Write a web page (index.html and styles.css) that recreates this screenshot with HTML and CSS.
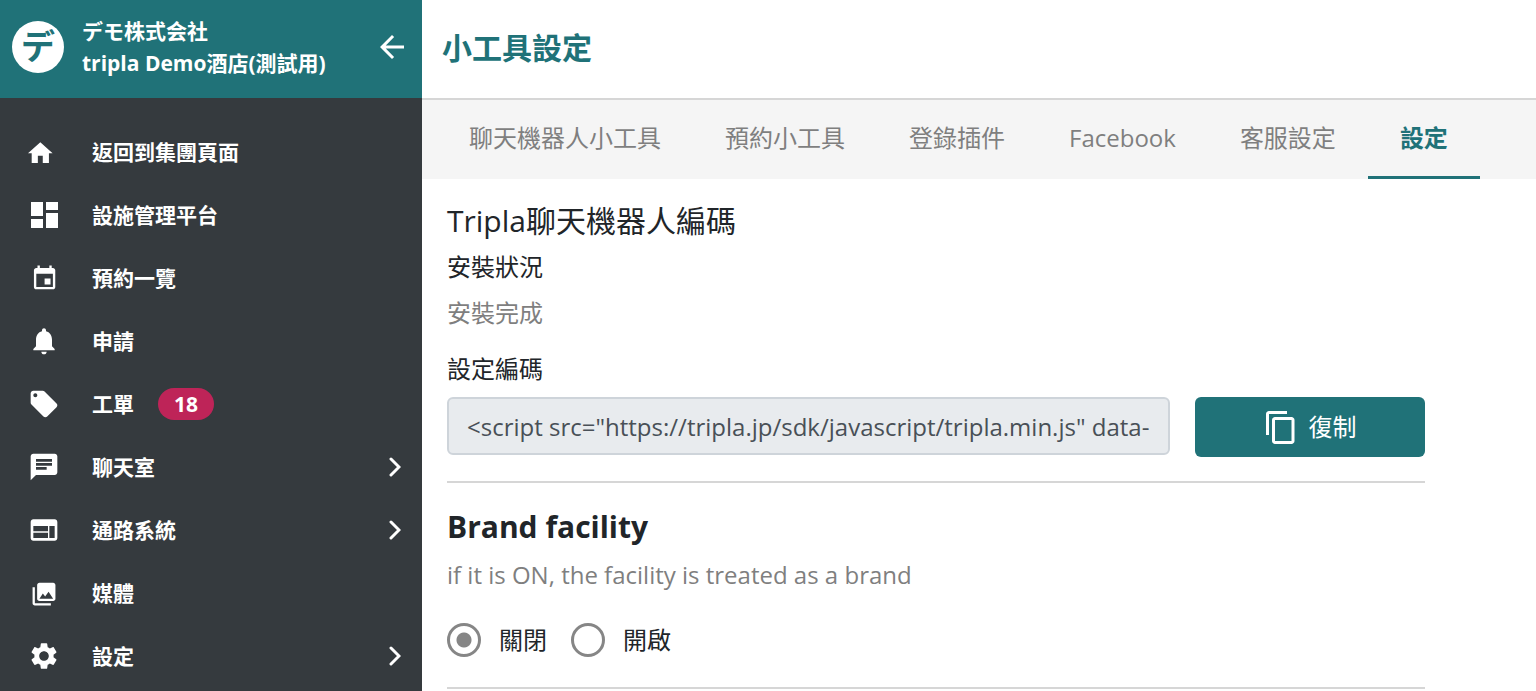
FILE: index.html
```
<!DOCTYPE html>
<html lang="zh-Hant">

<head>
    <meta charset="UTF-8">
    <meta name="viewport" content="width=device-width, initial-scale=1.0">
    <title>小工具設定</title>
    <link rel="stylesheet" href="styles.css">
</head>

<body>
    <aside class="sidebar">
        <div class="sidebar-header">
            <div class="logo">デ</div>
            <div class="hotel-name">
                <p>デモ株式会社</p>
                <p>tripla Demo酒店(測試用)</p>
            </div>
            <button type="button" class="collapse-button" aria-label="Collapse">
                <svg viewBox="0 0 24 24"><path d="M20 11H7.83l5.59-5.59L12 4l-8 8 8 8 1.41-1.41L7.83 13H20v-2z"/></svg>
            </button>
        </div>

        <nav class="menu">
            <a href="#" class="menu-item">
                <svg class="menu-icon" viewBox="2 -2 26 26"><path d="M10 20v-6h4v6h5v-8h3L12 3 2 12h3v8z"/></svg>
                <span>返回到集團頁面</span>
            </a>
            <a href="#" class="menu-item">
                <svg class="menu-icon" viewBox="0 0 32 32"><path d="M3 3h12v14H3zM3 20h12v9H3zM18 3h12v8H18zM18 14h12v15H18z"/></svg>
                <span>設施管理平台</span>
            </a>
            <a href="#" class="menu-item">
                <svg class="menu-icon" viewBox="-2 -2 27 27"><path d="M17 12h-5v5h5v-5zM16 1v2H8V1H6v2H5c-1.11 0-1.99.9-1.99 2L3 19c0 1.1.89 2 2 2h14c1.1 0 2-.9 2-2V5c0-1.1-.9-2-2-2h-1V1h-2zm3 18H5V8h14v11z"/></svg>
                <span>預約一覽</span>
            </a>
            <a href="#" class="menu-item">
                <svg class="menu-icon" viewBox="0 0 24 24"><path d="M12 22c1.1 0 2-.9 2-2h-4c0 1.1.89 2 2 2zm6-6v-5c0-3.07-1.64-5.64-4.5-6.32V4c0-.83-.67-1.5-1.5-1.5s-1.5.67-1.5 1.5v.68C7.63 5.36 6 7.92 6 11v5l-2 2v1h16v-1l-2-2z"/></svg>
                <span>申請</span>
            </a>
            <a href="#" class="menu-item">
                <svg class="menu-icon" viewBox="0 0 24 24"><path d="M21.41 11.58l-9-9C12.05 2.22 11.55 2 11 2H4c-1.1 0-2 .9-2 2v7c0 .55.22 1.05.59 1.42l9 9c.36.36.86.58 1.41.58.55 0 1.05-.22 1.41-.59l7-7c.37-.36.59-.86.59-1.41 0-.55-.23-1.06-.59-1.42zM5.5 7C4.67 7 4 6.33 4 5.5S4.67 4 5.5 4 7 4.67 7 5.5 6.33 7 5.5 7z"/></svg>
                <span>工單</span>
                <span class="badge">18</span>
            </a>
            <a href="#" class="menu-item">
                <svg class="menu-icon" viewBox="0 0 24 24"><path d="M20 2H4c-1.1 0-1.99.9-1.99 2L2 22l4-4h14c1.1 0 2-.9 2-2V4c0-1.1-.9-2-2-2zM6 9h12v2H6V9zm8 5H6v-2h8v2zm4-6H6V6h12v2z"/></svg>
                <span>聊天室</span>
                <svg class="chevron" viewBox="0 0 12 20"><path d="M2 2l8 8-8 8"/></svg>
            </a>
            <a href="#" class="menu-item">
                <svg class="menu-icon" viewBox="0 0 24 24"><path d="M20 4H4c-1.1 0-1.99.9-1.99 2L2 18c0 1.1.9 2 2 2h16c1.1 0 2-.9 2-2V6c0-1.1-.9-2-2-2zm-5 14H4v-4h11v4zm0-5H4V9h11v4zm5 5h-4V9h4v9z"/></svg>
                <span>通路系統</span>
                <svg class="chevron" viewBox="0 0 12 20"><path d="M2 2l8 8-8 8"/></svg>
            </a>
            <a href="#" class="menu-item">
                <svg class="menu-icon" viewBox="-2 -3 28 28"><path d="M22 16V4c0-1.1-.9-2-2-2H8c-1.1 0-2 .9-2 2v12c0 1.1.9 2 2 2h12c1.1 0 2-.9 2-2zM8 16l3-4.500 2 2.500 3-4 4 6H8zM2 6v14c0 1.1.9 2 2 2h14v-2H4V6H2z"/></svg>
                <span>媒體</span>
            </a>
            <a href="#" class="menu-item">
                <svg class="menu-icon" viewBox="0 0 24 24"><path d="M19.14 12.94c.04-.3.06-.61.06-.94 0-.32-.02-.64-.07-.94l2.03-1.58c.18-.14.23-.41.12-.61l-1.92-3.32c-.12-.22-.37-.29-.59-.22l-2.39.96c-.5-.38-1.03-.7-1.62-.94L14.4 2.81c-.04-.24-.24-.41-.48-.41h-3.84c-.24 0-.43.17-.47.41L9.25 5.35c-.59.24-1.13.57-1.62.94L5.24 5.33c-.22-.08-.47 0-.59.22L2.74 8.87c-.12.21-.08.47.12.61l2.03 1.58c-.05.3-.09.63-.09.94s.02.64.07.94l-2.03 1.58c-.18.14-.23.41-.12.61l1.92 3.32c.12.22.37.29.59.22l2.39-.96c.5.38 1.03.7 1.62.94l.36 2.54c.05.24.24.41.48.41h3.84c.24 0 .44-.17.47-.41l.36-2.54c.59-.24 1.13-.56 1.62-.94l2.39.96c.22.08.47 0 .59-.22l1.92-3.32c.12-.22.07-.47-.12-.61l-2.01-1.58zM12 15.6c-1.98 0-3.6-1.62-3.6-3.6s1.62-3.6 3.6-3.6 3.6 1.62 3.6 3.6-1.62 3.6-3.6 3.6z"/></svg>
                <span>設定</span>
                <svg class="chevron" viewBox="0 0 12 20"><path d="M2 2l8 8-8 8"/></svg>
            </a>
        </nav>
    </aside>

    <main class="main">
        <header class="page-header">
            <h1>小工具設定</h1>
        </header>

        <nav class="tabs">
            <a href="#" class="tab">聊天機器人小工具</a>
            <a href="#" class="tab">預約小工具</a>
            <a href="#" class="tab">登錄插件</a>
            <a href="#" class="tab">Facebook</a>
            <a href="#" class="tab">客服設定</a>
            <a href="#" class="tab active">設定</a>
        </nav>

        <div class="content">
            <section class="section">
                <h2>Tripla聊天機器人編碼</h2>
                <h3>安裝狀況</h3>
                <p class="status">安裝完成</p>
                <label for="embedCode" class="code-label">設定編碼</label>
                <div class="code-row">
                    <input type="text" id="embedCode" class="code-input" readonly value='&lt;script src="https://tripla.jp/sdk/javascript/tripla.min.js" data-'>
                    <button type="button" class="copy-button">
                        <svg viewBox="0 0 24 24"><path d="M16 0H4c-1.100 0-2 .9-2 2v14h2V2h12V0zm3 4H8c-1.100 0-2 .9-2 2v14c0 1.100.9 2 2 2h11c1.100 0 2-.9 2-2V6c0-1.100-.9-2-2-2zm0 16H8V6h11v14z"/></svg>
                        復制
                    </button>
                </div>
            </section>

            <section class="section">
                <h2 class="brand-title">Brand facility</h2>
                <p class="description">if it is ON, the facility is treated as a brand</p>
                <div class="radio-group">
                    <label class="radio"><input type="radio" name="brand" value="off" checked>關閉</label>
                    <label class="radio"><input type="radio" name="brand" value="on">開啟</label>
                </div>
            </section>
        </div>
    </main>
</body>

</html>
```
FILE: styles.css
```
* {
    margin: 0;
    padding: 0;
    box-sizing: border-box;
    font-family: 'Open Sans', 'Noto Sans CJK TC', sans-serif;
}

body {
    display: flex;
    min-height: 100vh;
    font-size: 24px;
    line-height: 32px;
    color: #212529;
    background: white;
}

a {
    text-decoration: none;
}

svg {
    display: block;
    flex: none;
    fill: currentColor;
}

/* Sidebar */
.sidebar {
    flex: none;
    width: 422px;
    font-size: 21px;
    font-weight: 700;
    color: white;
    background: #353a3e;
}

.sidebar-header {
    display: flex;
    align-items: center;
    height: 98px;
    padding: 0 12px 4px;
    background: #207278;
}

.logo {
    width: 52px;
    height: 52px;
    margin-right: 18px;
    border-radius: 50%;
    font-size: 34px;
    line-height: 50px;
    text-align: center;
    color: #207278;
    background: white;
}

.collapse-button {
    margin-left: auto;
    border: none;
    color: white;
    background: none;
    cursor: pointer;
}

.collapse-button svg {
    width: 36px;
    height: 36px;
}

.menu {
    padding-top: 22px;
}

.menu-item {
    display: flex;
    align-items: center;
    height: 63px;
    padding: 0 21px 0 28px;
    color: white;
}

.menu-icon {
    width: 32px;
    height: 32px;
    margin-right: 32px;
}

.badge {
    margin-left: 24px;
    padding: 0 16px;
    border-radius: 16px;
    background: #be2458;
}

.chevron {
    width: 12px;
    height: 20px;
    margin-left: auto;
    fill: none;
    stroke: currentColor;
    stroke-width: 3;
    stroke-linecap: round;
}

/* Main area */
.main {
    flex: 1;
    min-width: 0;
}

.page-header {
    display: flex;
    align-items: center;
    height: 100px;
    padding: 0 20px 2px;
    border-bottom: 2px solid #d6d6d6;
}

.page-header h1 {
    font-size: 30px;
    color: #207278;
}

.tabs {
    display: flex;
    height: 79px;
    padding: 0 15px;
    background: #f5f5f5;
}

.tab {
    padding: 22px 32px;
    color: #7f7f7f;
    white-space: nowrap;
}

.tab.active {
    font-weight: 700;
    color: #207278;
    border-bottom: 3px solid #207278;
}

.content {
    padding: 22px 10% 0 25px;
}

.section {
    padding-bottom: 24px;
    margin-bottom: 24px;
    border-bottom: 2px solid #d6d6d6;
}

.section:last-child {
    padding-bottom: 30px;
    margin-bottom: 0;
}

h2 {
    font-size: 30px;
    line-height: 40px;
    font-weight: 400;
}

h3 {
    margin-top: 10px;
    font-size: 24px;
    font-weight: 400;
}

.status {
    margin-top: 14px;
    color: #7f7f7f;
}

.code-label {
    display: block;
    margin: 24px 0 12px;
}

.code-row {
    display: flex;
    align-items: flex-start;
    gap: 25px;
}

.code-input {
    flex: 1;
    min-width: 0;
    height: 58px;
    padding: 0 18px;
    border: 2px solid #ced4da;
    border-radius: 6px;
    font-size: 24px;
    color: #495057;
    background: #e8ebee;
}

.copy-button {
    display: flex;
    align-items: center;
    justify-content: center;
    gap: 10px;
    width: 230px;
    height: 60px;
    padding-bottom: 4px;
    border: none;
    border-radius: 6px;
    font-size: 24px;
    color: white;
    background: #207278;
    cursor: pointer;
}

.copy-button svg {
    width: 36px;
    height: 36px;
    overflow: visible;
    margin-top: 8px;
}

.brand-title {
    font-weight: 700;
}

.description {
    margin-top: 12px;
    color: #7f7f7f;
}

.radio-group {
    display: flex;
    gap: 24px;
    margin-top: 32px;
}

.radio {
    display: flex;
    align-items: center;
    gap: 18px;
}

.radio input {
    appearance: none;
    width: 34px;
    height: 34px;
    border: 3px solid #868686;
    border-radius: 50%;
    background: white;
}

.radio input:checked {
    background: radial-gradient(circle, #868686 7px, white 8px);
}
```
